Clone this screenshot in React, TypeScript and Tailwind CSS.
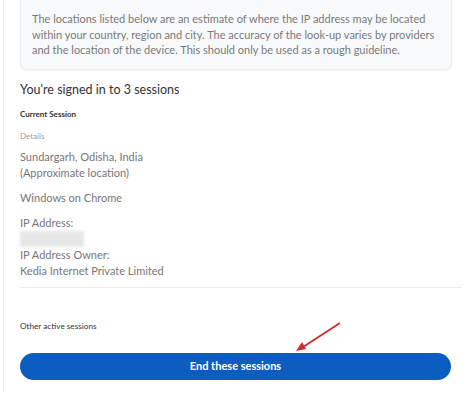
import React from "react";

export default function App() {
  return (
    <div
      className="relative w-[474px] h-[395px] bg-white overflow-hidden"
      style={{ fontFamily: 'Lato, "Open Sans", sans-serif' }}
    >
      <div className="ml-[3px] mr-[12px] h-full border-l border-[#ececec] pl-[16px] pr-[10px]">
        <div className="w-[432px] h-[72px] mt-[-2px] rounded-b-[6px] bg-[#f8f9fa] border border-[#eceef0] shadow-[0_1px_2px_rgba(0,0,0,0.06)] pl-[11px] pt-[12px] text-[11px] leading-[15.5px] text-[#7a7a7a] whitespace-nowrap">
          The locations listed below are an estimate of where the IP address may be located
          <br />
          within your country, region and city. The accuracy of the look-up varies by providers
          <br />
          and the location of the device. This should only be used as a rough guideline.
        </div>
        <div className="mt-[10px] text-[12.5px] leading-[20px] text-[#333]">You're signed in to 3 sessions</div>
        <div className="mt-[7px] text-[8px] leading-[14px] font-bold text-[#333]">Current Session</div>
        <div className="mt-[9px] text-[8px] leading-[12px] text-[#999]">Details</div>
        <div className="mt-[7px] text-[11px] leading-[16px] text-[#777]">
          <div>Sundargarh, Odisha, India</div>
          <div>(Approximate location)</div>
          <div className="mt-[9px]">Windows on Chrome</div>
          <div className="mt-[9px]">IP Address:</div>
          <div className="h-[16px] w-[64px] bg-[#e6e6e6] blur-[1.5px]" />
          <div>IP Address Owner:</div>
          <div>Kedia Internet Private Limited</div>
        </div>
        <div className="mt-[8px] h-px w-[442px] bg-[#ececec]" />
        <div className="mt-[31px] text-[8.2px] leading-[14px] text-[#333]">Other active sessions</div>
        <button className="mt-[20px] w-[431px] h-[27px] rounded-full bg-[#0b5dbf] text-white text-[11px] font-bold flex items-center justify-center">
          End these sessions
        </button>
      </div>
      <svg className="absolute left-0 top-0" width="474" height="395" viewBox="0 0 474 395">
        <line x1="340" y1="323" x2="303" y2="347" stroke="#d42a2a" strokeWidth="1.8" />
        <polygon points="296,351 302,342 306,349" fill="#d42a2a" />
      </svg>
    </div>
  );
}
